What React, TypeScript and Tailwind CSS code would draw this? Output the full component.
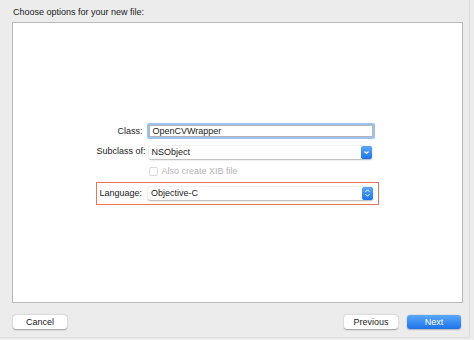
import React from 'react';

const font = { fontFamily: '"Liberation Sans", Arial, sans-serif' };

function Chevron({ double }: { double?: boolean }) {
  return (
    <span className="flex h-full w-[11px] items-center justify-center rounded-[2px] bg-gradient-to-b from-[#5aa8fb] to-[#1c74ea]">
      <svg width="7" height={double ? 10 : 7} viewBox={double ? '0 0 7 10' : '0 0 7 7'}>
        {double ? (
          <path d="M1.5 3.8 L3.5 1.8 L5.5 3.8 M1.5 6.2 L3.5 8.2 L5.5 6.2" stroke="white" strokeWidth="1" fill="none" />
        ) : (
          <path d="M1.5 2.5 L3.5 4.5 L5.5 2.5" stroke="white" strokeWidth="1.1" fill="none" />
        )}
      </svg>
    </span>
  );
}

function Popup({ value, double, width }: { value: string; double?: boolean; width: string }) {
  return (
    <div
      className={`flex h-[13px] items-stretch justify-between rounded-[2px] bg-white shadow-[0_0.5px_1.5px_rgba(0,0,0,0.3)] ${width}`}
    >
      <span className="pl-[3px] text-[9px] leading-[13px] text-[#222]">{value}</span>
      <Chevron double={double} />
    </div>
  );
}

export default function App() {
  return (
    <div className="h-[340px] w-[474px] overflow-hidden bg-[#ececec]" style={font}>
      <div className="flex h-[338px] w-[470px] flex-col border-r border-b border-[#dcdcdc]">
        {/* Header */}
        <div className="px-[13px] pt-[6px] pb-[4px] text-[9px] leading-[12px] text-[#1a1a1a]">
          Choose options for your new file:
        </div>

        {/* Panel */}
        <div className="mx-[12px] flex h-[281px] w-[451px] items-center justify-center border border-[#b8b8b8] bg-white">
          <div className="mt-[3px] flex w-[282px] flex-col">
            <div className="flex items-center">
              <span className="w-[46px] text-right text-[9px] text-[#222]">Class:</span>
              <div className="ml-[4px] h-[16px] w-[228px] rounded-[2px] border-[2px] border-[#9cc2f3] bg-white">
                <div className="h-full border border-[#b5b5b5] pl-[3px] text-[9px] leading-[10px] text-[#222]">
                  OpenCVWrapper
                </div>
              </div>
            </div>

            <div className="mt-[6px] flex items-center">
              <span className="w-[46px] whitespace-nowrap text-right text-[9px] text-[#222]">Subclass of:</span>
              <div className="ml-[6px]">
                <Popup value="NSObject" width="w-[223px]" />
              </div>
            </div>

            <div className="mt-[9px] flex h-[8px] items-center pl-[52px]">
              <span className="h-[9px] w-[9px] rounded-[2px] border border-[#dadada] bg-white" />
              <span className="ml-[4px] text-[9px] leading-[9px] text-[#b4b4b4]">Also create XIB file</span>
            </div>

            <div className="-ml-[1px] mt-[6px] flex h-[23px] items-center border-[1.5px] border-[#ec7458]">
              <span className="w-[45.5px] text-right text-[9px] text-[#222]">Language:</span>
              <div className="ml-[6px]">
                <Popup value="Objective-C" double width="w-[225px]" />
              </div>
            </div>
          </div>
        </div>

        {/* Footer */}
        <div className="mt-[12px] flex items-center pl-[13px] pr-[8px]">
          <button className="h-[14px] w-[54px] rounded-[3px] bg-white text-[9px] leading-[14px] text-[#222] shadow-[0_0.5px_1.5px_rgba(0,0,0,0.35)]">
            Cancel
          </button>
          <div className="flex-1" />
          <button className="h-[14px] w-[54px] rounded-[3px] bg-white text-[9px] leading-[14px] text-[#222] shadow-[0_0.5px_1.5px_rgba(0,0,0,0.35)]">
            Previous
          </button>
          <button className="ml-[9px] h-[14px] w-[54px] rounded-[3px] bg-gradient-to-b from-[#5aa8fb] to-[#1a72ea] text-[9px] leading-[14px] text-white shadow-[0_0.5px_1.5px_rgba(0,0,0,0.25)]">
            Next
          </button>
        </div>
      </div>
    </div>
  );
}
